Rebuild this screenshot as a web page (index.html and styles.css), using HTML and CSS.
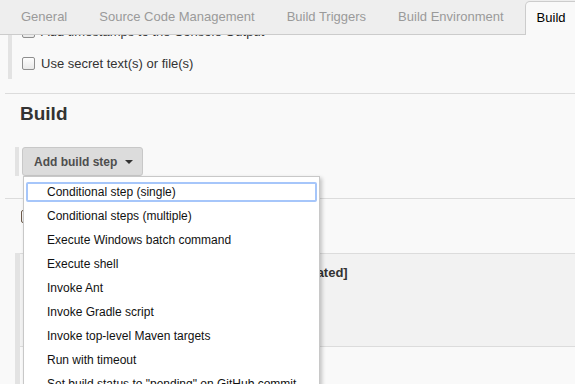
FILE: index.html
```html
<!DOCTYPE html>
<html>
<head>
<meta charset="utf-8">
<link rel="stylesheet" href="styles.css">
</head>
<body>
<nav class="tabbar">
  <div class="tab">General</div>
  <div class="tab">Source Code Management</div>
  <div class="tab">Build Triggers</div>
  <div class="tab">Build Environment</div>
  <div class="tab tab-active">Build</div>
</nav>
<main class="content">
  <div class="opts">
    <label class="opt"><input type="checkbox" class="cb"><span>Add timestamps to the Console Output</span></label>
    <label class="opt"><input type="checkbox" class="cb"><span>Use secret text(s) or file(s)</span></label>
  </div>
  <hr class="sep sep-a">
  <h2 class="section-title">Build</h2>
  <div class="step-bar">
    <button class="add-btn">Add build step <span class="caret"></span></button>
    <ul class="menu">
      <li class="item item-focus">Conditional step (single)</li>
      <li class="item">Conditional steps (multiple)</li>
      <li class="item">Execute Windows batch command</li>
      <li class="item">Execute shell</li>
      <li class="item">Invoke Ant</li>
      <li class="item">Invoke Gradle script</li>
      <li class="item">Invoke top-level Maven targets</li>
      <li class="item">Run with timeout</li>
      <li class="item">Set build status to "pending" on GitHub commit</li>
      <li class="item">Update relevant Jira issues</li>
    </ul>
  </div>
  <hr class="sep sep-b">
  <div class="cb-row"><input type="checkbox" class="cb"></div>
  <div class="steps">
    <div class="step-panel">
      <div class="step-title">Set build status on GitHub commit [deprecated]</div>
    </div>
    <div class="steps-tail"></div>
  </div>
</main>
</body>
</html>
```
FILE: styles.css
```css
html, body {
  margin: 0;
  padding: 0;
  overflow: hidden;
  height: 100%;
}
body {
  background: #f9f9f9;
  font-family: "Liberation Sans", Arial, sans-serif;
  font-size: 13px;
  color: #333;
}
.tabbar {
  position: fixed;
  top: 0;
  left: 0;
  right: 0;
  height: 34px;
  background: #eee;
  border-bottom: 1px solid #ccc;
  display: flex;
  align-items: flex-end;
  gap: 10px;
  padding-left: 10px;
  z-index: 10;
  white-space: nowrap;
}
.tab {
  padding: 0 11px;
  line-height: 34px;
  color: #9a9a9a;
  flex: none;
}
.tab-active {
  color: #000;
  background: #f9f9f9;
  border: 1px solid #ccc;
  border-bottom: none;
  border-top-left-radius: 5px;
  height: 34px;
  line-height: 31px;
  margin-bottom: -1px;
  padding-right: 40px;
  box-sizing: border-box;
}
.content {
  padding-top: 15px;
}
.opts {
  margin-left: 8px;
  border-left: 4px solid #e3e3e3;
  padding-left: 10px;
}
.opt {
  display: flex;
  align-items: center;
  height: 32px;
  gap: 6px;
  color: #333;
}
.cb {
  appearance: none;
  -webkit-appearance: none;
  width: 13px;
  height: 13px;
  margin: 0;
  border: 1px solid #8e8e8e;
  border-radius: 2px;
  background: linear-gradient(#fdfdfd, #e9e9e9);
  box-sizing: border-box;
  flex: none;
}
.sep {
  border: none;
  height: 1px;
  background: #dcdcdc;
  margin: 0 0 0 5px;
}
.sep-a {
  margin-top: 14px;
}
.section-title {
  margin: 9px 0 0 20px;
  font-size: 19px;
  line-height: 22px;
  font-weight: bold;
  color: #333;
}
.step-bar {
  position: relative;
  margin: 22px 0 0 15px;
  border-left: 4px solid #e3e3e3;
  padding-left: 3px;
  display: flex;
}
.add-btn {
  height: 29px;
  padding: 0 9px 0 11px;
  display: flex;
  align-items: center;
  gap: 8px;
  font-family: "Liberation Sans", Arial, sans-serif;
  font-size: 12px;
  font-weight: bold;
  color: #4e4e4e;
  background: #dcdcdc;
  border: 1px solid #c8c8c8;
  border-radius: 3px;
}
.caret {
  width: 0;
  height: 0;
  border-left: 4px solid transparent;
  border-right: 4px solid transparent;
  border-top: 4px solid #333;
}
.menu {
  position: absolute;
  top: 100%;
  left: 4px;
  width: 295px;
  margin: 0;
  padding: 3px 0 2px;
  list-style: none;
  background: #fff;
  border: 1px solid #c8c8c8;
  box-shadow: 2px 2px 4px rgba(0, 0, 0, 0.22);
  z-index: 5;
}
.item {
  height: 24px;
  line-height: 24px;
  padding-left: 23px;
  font-size: 12px;
  color: #111;
  white-space: nowrap;
}
.item-focus {
  outline: 2px solid #a6c6fa;
  outline-offset: -4px;
  border-radius: 4px;
}
.sep-b {
  margin-top: 22px;
}
.cb-row {
  padding: 11px 0 0 21px;
  display: flex;
}
.cb-row .cb {
  border-color: #6d5a4a;
}
.steps {
  margin: 30px 0 0 15px;
  border-left: 5px solid #e3e3e3;
}
.step-panel {
  background: #f2f2f2;
  border-top: 1px solid #dcdcdc;
  border-bottom: 1px solid #dcdcdc;
  padding: 11px 0 65px 33px;
}
.step-title {
  font-weight: bold;
  font-size: 13px;
  line-height: 16px;
  color: #333;
  white-space: nowrap;
}
.steps-tail {
  height: 60px;
}
```
